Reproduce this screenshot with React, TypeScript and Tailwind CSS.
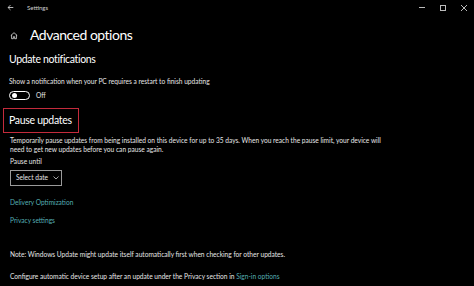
import React from "react";

function TitleBar() {
  return (
    <div className="flex h-[15px] items-center justify-between text-white">
      <div className="flex items-center">
        <svg className="ml-[7px] h-[7px] w-[7px]" viewBox="0 0 10 10" fill="none" stroke="#d8d8d8" strokeWidth={1.2}>
          <path d="M9 5H1.5M5 1.5L1.5 5L5 8.5" />
        </svg>
        <span className="ml-[13px] text-[6px] text-[#d0d0d0]">Settings</span>
      </div>
      <div className="flex items-center">
        <div className="flex w-[21px] justify-center">
          <div className="h-px w-[6px] bg-[#bbb]" />
        </div>
        <div className="flex w-[21px] justify-center">
          <div className="h-[6px] w-[6px] border border-[#bbb]" />
        </div>
        <div className="flex w-[21px] justify-center">
          <svg className="h-[6px] w-[6px]" viewBox="0 0 6 6" stroke="#bbb" strokeWidth={1}>
            <path d="M0 0L6 6M6 0L0 6" />
          </svg>
        </div>
      </div>
    </div>
  );
}

function Toggle() {
  return (
    <div className="flex h-[9px] w-[21px] items-center rounded-full border border-white px-[1.5px]">
      <div className="h-[5px] w-[5px] rounded-full bg-white" />
    </div>
  );
}

export default function App() {
  return (
    <div
      className="h-[286px] w-[474px] overflow-hidden bg-black text-white"
      style={{ fontFamily: "Lato, 'Noto Sans', sans-serif" }}
    >
      <TitleBar />

      <div className="mt-[11px] flex items-center pl-[10px]">
        <svg className="h-[9px] w-[8px]" viewBox="0 0 10 10" fill="none" stroke="#e0e0e0" strokeWidth={1}>
          <path d="M1 5L5 1.5L9 5M2 4.2V9H4.2V6.5H5.8V9H8V4.2" />
        </svg>
        <h1 className="ml-[12px] text-[14px] leading-[18px] font-normal tracking-[-0.5px]">Advanced options</h1>
      </div>

      <div className="pl-[9px]">
        <h2 className="mt-[8px] text-[10.5px] leading-[15px] tracking-[-0.35px]">Update notifications</h2>
        <p className="mt-[10px] text-[6.6px] leading-[9px] text-[#e6e6e6]">
          Show a notification when your PC requires a restart to finish updating
        </p>
        <div className="mt-[5px] flex items-center">
          <Toggle />
          <span className="ml-[6px] text-[6.6px] text-[#e6e6e6]">Off</span>
        </div>
      </div>

      <div className="mt-[7px] ml-[3px] w-[76px] border-[1.5px] border-[#c42b3c] py-[5px] pl-[5px]">
        <h2 className="text-[10.5px] leading-[13px] whitespace-nowrap tracking-[-0.3px]">Pause updates</h2>
      </div>

      <div className="pl-[10px]">
        <p className="mt-[3px] w-[378px] text-[6.6px] leading-[9px] text-[#e6e6e6]">
          Temporarily pause updates from being installed on this device for up to 35 days. When you reach the pause limit, your device will need to get new updates before you can pause again.
        </p>
        <p className="mt-[3px] text-[6.6px] leading-[9px] text-[#e6e6e6]">Pause until</p>
        <div className="mt-[4px] flex h-[16px] w-[52px] items-center border border-[#9a9a9a] pl-[5px]">
          <span className="text-[6.6px] text-[#e6e6e6]">Select date</span>
          <svg className="ml-[5px] h-[4px] w-[6px]" viewBox="0 0 6 4" fill="none" stroke="#ccc" strokeWidth={0.8}>
            <path d="M0.5 0.5L3 3L5.5 0.5" />
          </svg>
        </div>
        <a className="mt-[12px] block text-[6.6px] leading-[9px] text-[#55aeb3]">Delivery Optimization</a>
        <a className="mt-[9px] block text-[6.6px] leading-[9px] text-[#55aeb3]">Privacy settings</a>

        <p className="mt-[25px] text-[6.6px] leading-[9px] text-[#e6e6e6]">
          Note: Windows Update might update itself automatically first when checking for other updates.
        </p>
        <p className="mt-[13px] text-[6.6px] leading-[9px] text-[#e6e6e6]">
          Configure automatic device setup after an update under the Privacy section in{" "}
          <a className="text-[#55aeb3]">Sign-in options</a>
        </p>
      </div>
    </div>
  );
}
